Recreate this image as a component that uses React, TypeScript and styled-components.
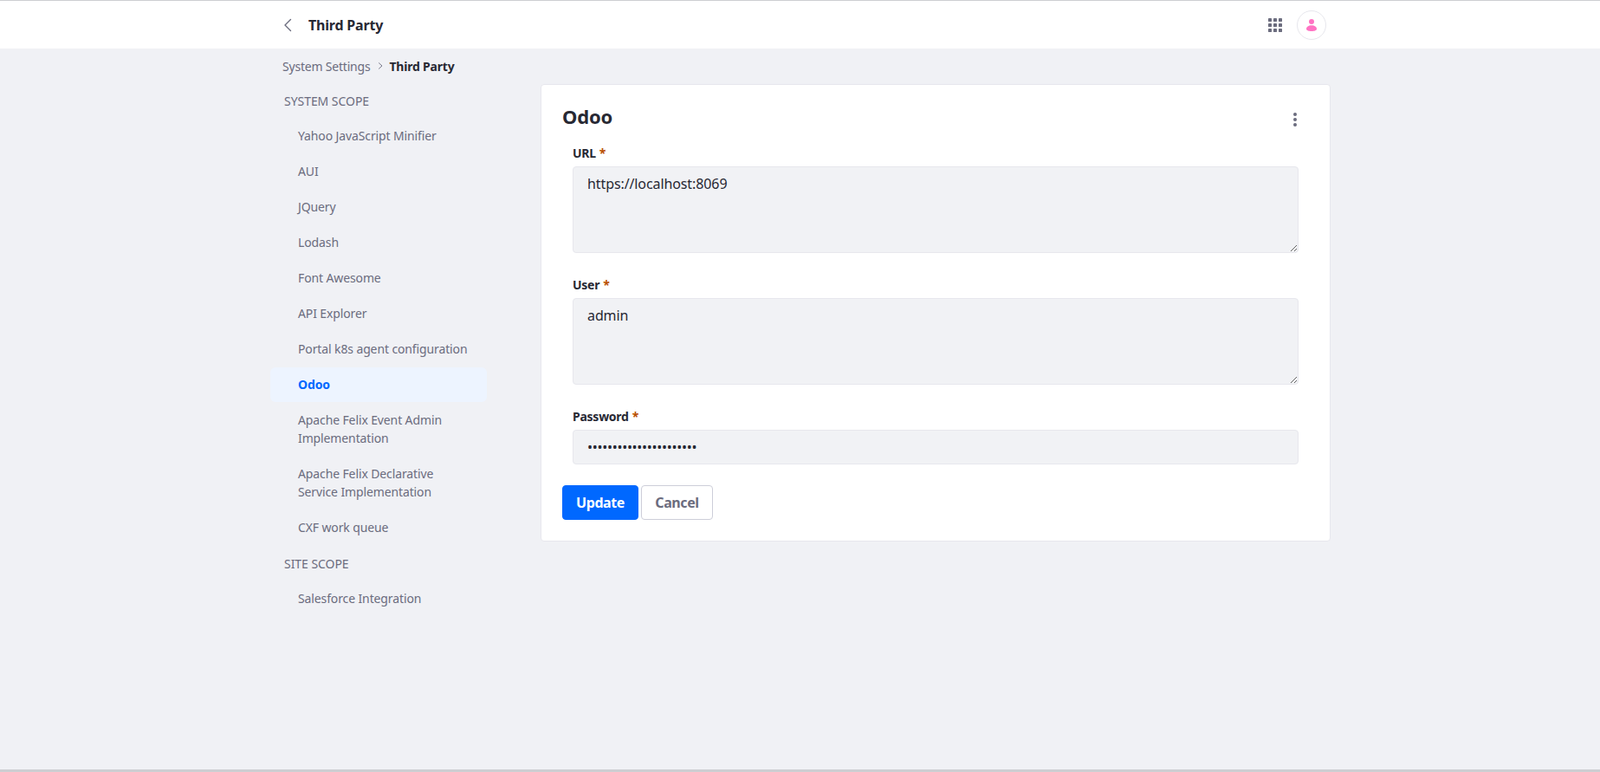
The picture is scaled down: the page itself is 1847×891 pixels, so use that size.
import React from "react";
import styled, { createGlobalStyle } from "styled-components";

const Global = createGlobalStyle`
  html, body { margin: 0; padding: 0; }
  body {
    background: #f0f1f5;
    font-family: "Noto Sans", "Open Sans", sans-serif;
    color: #272833;
  }
`;

const Page = styled.div`
  height: 891px;
  box-sizing: border-box;
  border-top: 1px solid #cdced2;
  border-bottom: 3px solid #cdced2;
  display: flex;
  flex-direction: column;
  overflow: hidden;
`;

const TopBar = styled.header`
  height: 55px;
  flex: none;
  background: #fff;
  display: flex;
  align-items: center;
  padding: 0 316px 0 324px;
`;

const BackLink = styled.a`
  display: flex;
  color: #6b6c7e;
  margin-right: 16px;
`;

const PageTitle = styled.h1`
  margin: 0;
  font-size: 16px;
  font-weight: 700;
  letter-spacing: -0.2px;
  color: #272833;
  flex: 1;
`;

const TopActions = styled.div`
  display: flex;
  align-items: center;
  gap: 17px;
`;

const AppsIcon = styled.svg`
  display: block;
  width: 16px;
  height: 16px;
`;

const Avatar = styled.div`
  width: 34px;
  height: 34px;
  box-sizing: border-box;
  border: 1px solid #e7e7ed;
  border-radius: 50%;
  display: flex;
  align-items: center;
  justify-content: center;
`;

const Breadcrumb = styled.nav`
  height: 20px;
  margin-top: 10px;
  padding-left: 326px;
  display: flex;
  align-items: center;
  font-size: 14px;
  letter-spacing: -0.2px;
  color: #6b6c7e;
`;

const Crumb = styled.span`
  color: #6b6c7e;
`;

const CrumbSeparator = styled.span`
  display: flex;
  margin: 0 6px 0 8px;
`;

const CrumbCurrent = styled.span`
  font-weight: 700;
  color: #272833;
`;

const Body = styled.div`
  display: flex;
  align-items: flex-start;
  padding-left: 312px;
  margin-top: 10px;
`;

const Sidebar = styled.aside`
  width: 250px;
  flex: none;
  margin-right: 62px;
`;

const SectionTitle = styled.div`
  font-size: 14px;
  line-height: 21px;
  padding: 10px 16px 9px;
  margin-bottom: 1px;
  letter-spacing: -0.05px;
  color: #6b6c7e;
`;

const NavItem = styled.a<{ $active?: boolean }>`
  display: block;
  font-size: 14px;
  line-height: 21px;
  padding: 9px 16px 10px 32px;
  margin-bottom: 1px;
  border-radius: 6px;
  letter-spacing: -0.12px;
  color: ${(p) => (p.$active ? "#0068ff" : "#6b6c7e")};
  font-weight: ${(p) => (p.$active ? 700 : 400)};
  background: ${(p) => (p.$active ? "#edf4ff" : "transparent")};
`;

const Card = styled.section`
  width: 912px;
  height: 528px;
  margin-top: 1px;
  box-sizing: border-box;
  background: #fff;
  border: 1px solid #e7e7ed;
  border-radius: 4px;
  padding: 19px 24px 20px;
`;

const CardHeader = styled.div`
  display: flex;
  align-items: center;
  justify-content: space-between;
  height: 34px;
`;

const CardTitle = styled.h2`
  margin: 0;
  font-size: 22px;
  font-weight: 700;
  letter-spacing: -0.2px;
  color: #272833;
`;

const KebabIcon = styled.svg`
  display: block;
  width: 16px;
  height: 16px;
  margin-right: 8px;
  margin-top: 8px;
`;

const Fields = styled.div`
  padding: 0 12px;
  margin-top: 16px;
`;

const Field = styled.div`
  margin-bottom: 27px;
`;

const PasswordField = styled(Field)`
  margin-bottom: 24px;
`;

const Label = styled.label`
  display: block;
  font-size: 14px;
  line-height: 20px;
  font-weight: 700;
  letter-spacing: -0.25px;
  color: #272833;
  margin-bottom: 5px;
`;

const Req = styled.span`
  color: #b95000;
  margin-left: 4px;
`;

const TextArea = styled.textarea`
  display: block;
  width: 100%;
  height: 100px;
  box-sizing: border-box;
  background: #f1f2f5;
  border: 1px solid #e7e7ed;
  border-radius: 4px;
  padding: 7px 16px;
  font: 400 16px/24px "Noto Sans", "Open Sans", sans-serif;
  letter-spacing: -0.1px;
  color: #272833;
  resize: vertical;
  outline: none;
`;

const Input = styled.input`
  display: block;
  width: 100%;
  height: 40px;
  box-sizing: border-box;
  background: #f1f2f5;
  border: 1px solid #e7e7ed;
  border-radius: 4px;
  padding: 8px 16px;
  font: 400 16px/24px "Noto Sans", "Open Sans", sans-serif;
  letter-spacing: -0.28px;
  color: #272833;
  outline: none;
`;

const Actions = styled.div`
  display: flex;
  gap: 3px;
`;

const Button = styled.button<{ $primary?: boolean }>`
  height: 40px;
  width: ${(p) => (p.$primary ? "88px" : "83px")};
  box-sizing: border-box;
  border-radius: 4px;
  border: 1px solid ${(p) => (p.$primary ? "#0068ff" : "#cdced9")};
  background: ${(p) => (p.$primary ? "#0068ff" : "#fff")};
  color: ${(p) => (p.$primary ? "#fff" : "#6b6c7e")};
  font: 700 16px "Noto Sans", "Open Sans", sans-serif;
  letter-spacing: -0.4px;
  padding: 0;
`;

const systemItems = [
  "Yahoo JavaScript Minifier",
  "AUI",
  "JQuery",
  "Lodash",
  "Font Awesome",
  "API Explorer",
  "Portal k8s agent configuration",
  "Odoo",
  "Apache Felix Event Admin Implementation",
  "Apache Felix Declarative Service Implementation",
  "CXF work queue",
];

export default function App() {
  return (
    <Page>
      <Global />
      <TopBar>
        <BackLink>
          <svg width="16" height="16" viewBox="0 0 16 16" fill="none" stroke="#6b6c7e" strokeWidth="1.4" strokeLinecap="round" strokeLinejoin="round">
            <path d="M11.5 1.5 5 8l6.5 6.5" />
          </svg>
        </BackLink>
        <PageTitle>Third Party</PageTitle>
        <TopActions>
          <AppsIcon viewBox="0 0 16 16" fill="#6b6c7e">
            {[0, 6, 12].map((y) =>
              [0, 6, 12].map((x) => <rect key={`${x}-${y}`} x={x} y={y} width="4" height="4" rx="0.4" />)
            )}
          </AppsIcon>
          <Avatar>
            <svg width="14" height="16" viewBox="0 0 14 16" fill="#ff73c3">
              <circle cx="7" cy="4" r="3" />
              <path d="M1 12.2C1 10 3.5 8.2 7 8.2s6 1.8 6 4c0 1.8-2.6 2.8-6 2.8s-6-1-6-2.8z" />
            </svg>
          </Avatar>
        </TopActions>
      </TopBar>

      <Breadcrumb>
        <Crumb>System Settings</Crumb>
        <CrumbSeparator>
          <svg width="8" height="8" viewBox="0 0 8 8" fill="none" stroke="#6b6c7e" strokeWidth="0.9" strokeLinecap="round" strokeLinejoin="round">
            <path d="M2.5 0.8 6 4 2.5 7.2" />
          </svg>
        </CrumbSeparator>
        <CrumbCurrent>Third Party</CrumbCurrent>
      </Breadcrumb>

      <Body>
        <Sidebar>
          <SectionTitle>SYSTEM SCOPE</SectionTitle>
          {systemItems.map((item) => (
            <NavItem key={item} $active={item === "Odoo"}>
              {item}
            </NavItem>
          ))}
          <SectionTitle>SITE SCOPE</SectionTitle>
          <NavItem>Salesforce Integration</NavItem>
        </Sidebar>

        <Card>
          <CardHeader>
            <CardTitle>Odoo</CardTitle>
            <KebabIcon viewBox="0 0 16 16" fill="#6b6c7e">
              <circle cx="8" cy="2" r="2" />
              <circle cx="8" cy="8" r="2" />
              <circle cx="8" cy="14" r="2" />
            </KebabIcon>
          </CardHeader>
          <Fields>
            <Field>
              <Label>
                URL<Req>*</Req>
              </Label>
              <TextArea readOnly defaultValue="https://localhost:8069" />
            </Field>
            <Field>
              <Label>
                User<Req>*</Req>
              </Label>
              <TextArea readOnly defaultValue="admin" />
            </Field>
            <PasswordField>
              <Label>
                Password<Req>*</Req>
              </Label>
              <Input readOnly type="password" defaultValue="passwordpasswordpasswo" />
            </PasswordField>
          </Fields>
          <Actions>
            <Button $primary>Update</Button>
            <Button>Cancel</Button>
          </Actions>
        </Card>
      </Body>
    </Page>
  );
}
